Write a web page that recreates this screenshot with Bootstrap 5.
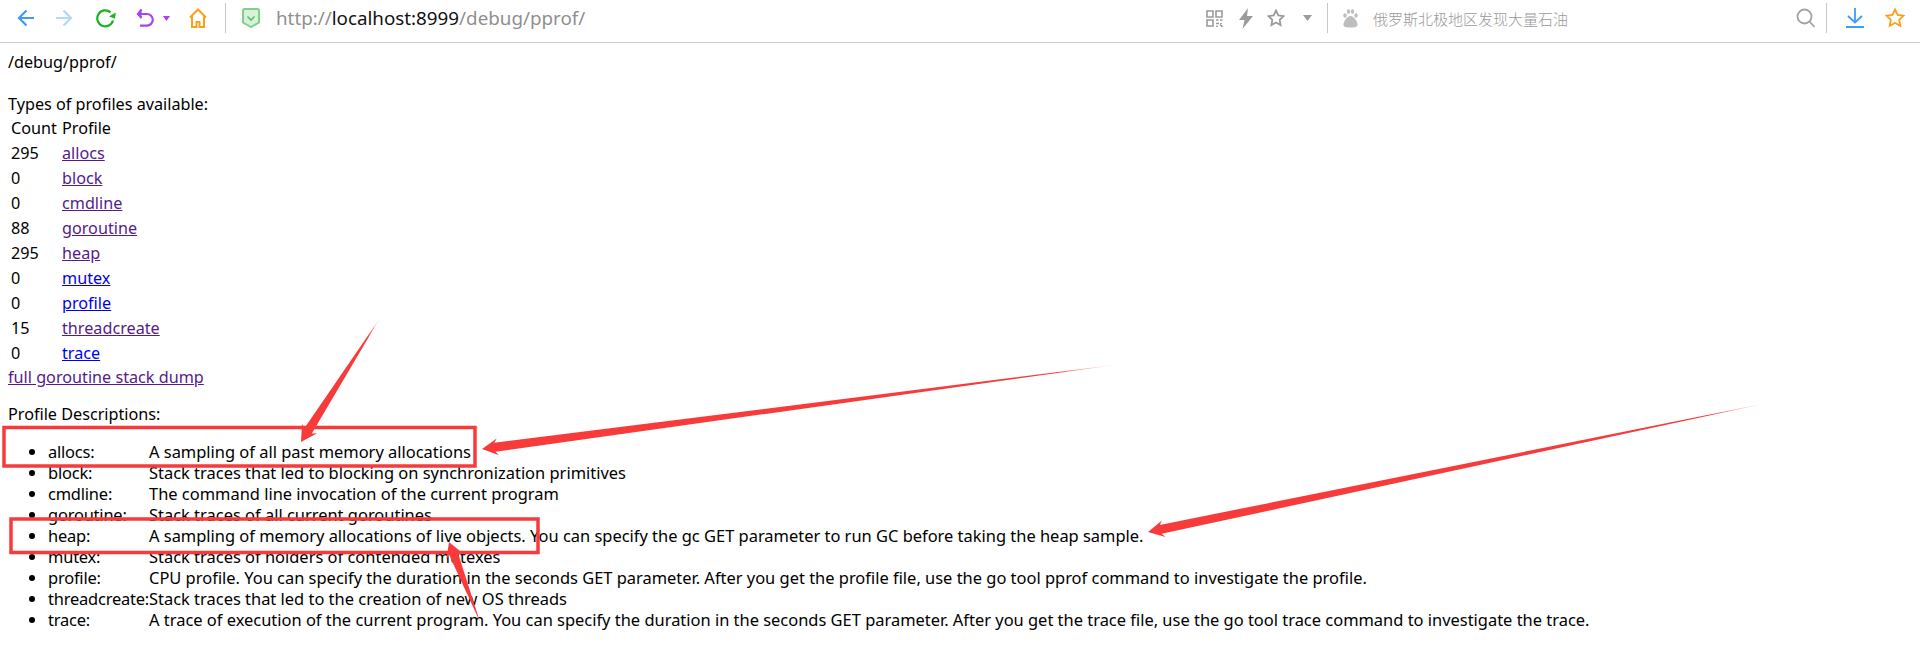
<!DOCTYPE html>
<html lang="en">
  <head>
    <meta charset="UTF-8" />
    <title>/debug/pprof/</title>
    <link
      href="https://cdn.jsdelivr.net/npm/bootstrap@5.3.0/dist/css/bootstrap.min.css"
      rel="stylesheet"
    />
    <style>
      body {
        background: #fff;
        color: #000;
        font-family: "Noto Sans", "Noto Sans CJK SC", sans-serif;
        font-size: 16.2px;
        line-height: 21px;
      }
      a { color: #0000ee; }
      a.seen { color: #551a8b; }

      /* browser toolbar */
      .toolbar {
        height: 43px;
        padding-bottom: 6px;
        border-bottom: 1px solid #cdcdcd;
      }
      .toolbar svg { display: block; flex: none; fill: none; }
      .tb-sep { width: 1px; height: 30px; background: #c8c8c8; flex: none; }
      .m-back { margin-left: 17px; }
      .m-forward { margin-left: 22px; }
      .m-reload { margin-left: 23px; }
      .m-undo { margin-left: 20px; }
      .m-caret { margin-left: 9px; }
      .m-home { margin-left: 19px; }
      .m-sep1 { margin-left: 18px; }
      .m-shield { margin-left: 16px; }
      .tb-url {
        flex: none;
        width: 930px;
        margin-left: 16px;
        padding-top: 1px;
        font-size: 18.8px;
        color: #8f8f8f;
        white-space: nowrap;
      }
      .tb-url b { font-weight: 400; color: #111; }
      .m-bolt { margin-left: 16px; }
      .m-star { margin-left: 14px; }
      .m-caret2 { margin-left: 18px; }
      .m-sep2 { margin-left: 15px; }
      .m-paw { margin-left: 14px; }
      .tb-search {
        margin-left: 14px;
        font-family: "Noto Sans CJK SC", sans-serif;
        font-size: 15px;
        font-weight: 300;
        color: #9a9a9a;
        white-space: nowrap;
      }
      .m-sep3 { margin-left: 10px; }
      .m-down { margin-left: 19px; }
      .m-star2 { margin-left: 21px; margin-right: 15px; }

      /* pprof page */
      .page { padding: 9px 8px 8px; }
      .page table { border-collapse: separate; border-spacing: 2px; }
      .page td, .page th { padding: 1px; font-weight: 400; text-align: left; }
      .prof-count { width: 49px; }
      .page p { margin: 16px 0; }
      .page ul { margin: 15px 0 0; padding-left: 40px; font-size: 16.45px; }
      .prof-name { display: inline-block; width: 101px; letter-spacing: -0.2px; white-space: nowrap; }

      .marks {
        position: absolute;
        top: 0;
        left: 0;
        pointer-events: none;
      }
    </style>
  </head>
  <body>
    <div class="toolbar d-flex align-items-center">
      <svg class="m-back" width="17" height="18" viewBox="0 0 17 18" stroke="#3f9bfb" stroke-width="2.200"><path d="M17 9H2M9.500 1.500 2 9l7.500 7.500" /></svg>
      <svg class="m-forward" width="17" height="18" viewBox="0 0 17 18" stroke="#b4d7fd" stroke-width="2.200"><path d="M0 9h15M7.500 1.500 15 9l-7.500 7.500" /></svg>
      <svg class="m-reload" width="20" height="19" viewBox="0 0 20 19" stroke="#14b51e" stroke-width="2.200"><path d="M14.500 3.300A8 8 0 1 0 17 11.500" /><path d="M19.800 3.500 19 9.500l-6-2z" fill="#14b51e" stroke="none" /></svg>
      <svg class="m-undo" width="18" height="18" viewBox="0 0 18 18" stroke="#a444f5" stroke-width="2.200"><path d="M2 5h9a5.800 5.800 0 0 1 0 11.600H4" /><path d="M5.500 0 1 5l4.500 4.500" fill="#a444f5" stroke="none" /><path d="M5.500 0.500 2 5l3.500 4" /></svg>
      <svg class="m-caret" width="7" height="5" viewBox="0 0 7 5"><path d="M0 0h7L3.500 5z" fill="#a444f5" /></svg>
      <svg class="m-home" width="18" height="20" viewBox="0 0 18 20" stroke="#f9a11b" stroke-width="2"><path d="M1 9.500 9 1.500l8 8M3 8.500V19h4.500v-5h3v5H15V8.500" /></svg>
      <div class="tb-sep m-sep1"></div>
      <svg class="m-shield" width="18" height="20" viewBox="0 0 18 20"><path d="M1 2.500Q1 1 2.500 1h13Q17 1 17 2.500v12L9 19l-8-4.500z" fill="#d8f2da" stroke="#7fd088" stroke-width="2" /><path d="M5.500 8.500 9 12l3.500-3.500" stroke="#5cbf69" stroke-width="1.600" /></svg>
      <div class="tb-url">http://<b>localhost:8999</b>/debug/pprof/</div>

      <svg width="17" height="17" viewBox="0 0 17 17" stroke="#9b9b9b" stroke-width="1.600"><path d="M1 1h6v6H1zM10 1h6v6h-6zM1 10h6v6H1z" /><path d="M10 10h2.500M14 10h2.500M10 13.500h3M15 13v1M10 16.500h2M14 14.500l2.500 2.500" /></svg>
      <svg class="m-bolt" width="14" height="21" viewBox="0 0 14 21"><path d="M9 0 0 12h5.500L3.500 21 14 8H8z" fill="#9b9b9b" /></svg>
      <svg class="m-star" width="18" height="18" viewBox="0 0 18 18" stroke="#9b9b9b" stroke-width="1.800"><path d="M9 1.500l2.300 4.900 5.200.7-3.800 3.700.9 5.300L9 13.500l-4.600 2.600.9-5.300L1.500 7.100l5.200-.7z" /></svg>
      <svg class="m-caret2" width="9" height="6" viewBox="0 0 9 6"><path d="M0 0h9L4.500 6z" fill="#9b9b9b" /></svg>
      <div class="tb-sep m-sep2"></div>
      <svg class="m-paw" width="17" height="19" viewBox="0 0 17 19"><ellipse cx="3" cy="6.500" rx="1.700" ry="2.300" fill="#bdbdbd" /><ellipse cx="6.500" cy="2.500" rx="1.700" ry="2.300" fill="#bdbdbd" /><ellipse cx="10.500" cy="2.500" rx="1.700" ry="2.300" fill="#bdbdbd" /><ellipse cx="14" cy="6.500" rx="1.700" ry="2.300" fill="#bdbdbd" /><path d="M8.500 7c3 0 7 5 7 8.500 0 3-3.500 3-7 3s-7 0-7-3C1.500 12 5.500 7 8.500 7z" fill="#bdbdbd" /></svg>
      <div class="tb-search">俄罗斯北极地区发现大量石油</div>

      <div class="flex-grow-1"></div>

      <svg width="20" height="20" viewBox="0 0 20 20" stroke="#a3a3a3" stroke-width="1.800"><circle cx="8.500" cy="8.500" r="7" /><path d="M13.500 13.500 18.500 19" /></svg>
      <div class="tb-sep m-sep3"></div>
      <svg class="m-down" width="18" height="20" viewBox="0 0 18 20" stroke="#3f9bfb" stroke-width="1.800"><path d="M9 0v14M2 8l7 6.500L16 8M0 19h18" /></svg>
      <svg class="m-star2" width="20" height="20" viewBox="0 0 20 20" stroke="#f9a11b" stroke-width="1.800"><path d="M10 1.500l2.600 5.500 5.900.8-4.300 4.100 1.100 5.900L10 15l-5.300 2.800 1.100-5.900L1.500 7.800l5.900-.8z" /></svg>
    </div>

    <div class="page">
      /debug/pprof/<br />
      <br />
      Types of profiles available:
      <table>
        <thead>
          <tr><td class="prof-count">Count</td><td>Profile</td></tr>
        </thead>
        <tbody>
          <tr><td>295</td><td><a class="seen" href="#">allocs</a></td></tr>
          <tr><td>0</td><td><a class="seen" href="#">block</a></td></tr>
          <tr><td>0</td><td><a class="seen" href="#">cmdline</a></td></tr>
          <tr><td>88</td><td><a class="seen" href="#">goroutine</a></td></tr>
          <tr><td>295</td><td><a class="seen" href="#">heap</a></td></tr>
          <tr><td>0</td><td><a href="#">mutex</a></td></tr>
          <tr><td>0</td><td><a href="#">profile</a></td></tr>
          <tr><td>15</td><td><a class="seen" href="#">threadcreate</a></td></tr>
          <tr><td>0</td><td><a href="#">trace</a></td></tr>
        </tbody>
      </table>
      <a class="seen" href="#">full goroutine stack dump</a>
      <p>Profile Descriptions:</p>
      <ul>
        <li><div class="prof-name">allocs:</div>A sampling of all past memory allocations</li>
        <li><div class="prof-name">block:</div>Stack traces that led to blocking on synchronization primitives</li>
        <li><div class="prof-name">cmdline:</div>The command line invocation of the current program</li>
        <li><div class="prof-name">goroutine:</div>Stack traces of all current goroutines</li>
        <li><div class="prof-name">heap:</div>A sampling of memory allocations of live objects. You can specify the gc GET parameter to run GC before taking the heap sample.</li>
        <li><div class="prof-name">mutex:</div>Stack traces of holders of contended mutexes</li>
        <li><div class="prof-name">profile:</div>CPU profile. You can specify the duration in the seconds GET parameter. After you get the profile file, use the go tool pprof command to investigate the profile.</li>
        <li><div class="prof-name">threadcreate:</div>Stack traces that led to the creation of new OS threads</li>
        <li><div class="prof-name">trace:</div>A trace of execution of the current program. You can specify the duration in the seconds GET parameter. After you get the trace file, use the go tool trace command to investigate the trace.</li>
      </ul>
    </div>

    <!-- red annotations drawn on top of the page -->
    <svg class="marks" id="marks" width="1920" height="652" fill="none">
      <rect x="4" y="427.500" width="471" height="38.500" stroke="#f73b3b" stroke-width="3.500" />
      <rect x="11" y="519" width="527" height="33.500" stroke="#f73b3b" stroke-width="3.500" />
    </svg>

    <script>
      // tail x, tail y, tip x, tip y, shaft width, head length, head half width, fade
      const arrows = [
        [380, 318, 301, 442, 9, 13, 9, 0.15],
        [1122, 364, 482, 449, 9, 13, 8.500, 0.1],
        [1772, 402, 1148, 532, 9, 13, 8.500, 0.1],
        [480, 622, 449, 542, 9, 12, 8.500, 0.02],
      ];

      const svg = document.getElementById("marks");
      const ns = "http://www.w3.org/2000/svg";
      const defs = document.createElementNS(ns, "defs");
      svg.appendChild(defs);

      arrows.forEach(([tx, ty, hx, hy, w, hl, hw, fade], i) => {
        const len = Math.hypot(hx - tx, hy - ty);
        const ux = (hx - tx) / len;
        const uy = (hy - ty) / len;
        const nx = -uy;
        const ny = ux;
        const bx = hx - ux * hl;
        const by = hy - uy * hl;
        const pt = (x, y) => `${x.toFixed(1)},${y.toFixed(1)}`;

        // tail fades out to white
        const grad = document.createElementNS(ns, "linearGradient");
        grad.setAttribute("id", `fade${i}`);
        grad.setAttribute("gradientUnits", "userSpaceOnUse");
        grad.setAttribute("x1", tx);
        grad.setAttribute("y1", ty);
        grad.setAttribute("x2", hx);
        grad.setAttribute("y2", hy);
        grad.innerHTML =
          '<stop offset="0" stop-color="#f73b3b" stop-opacity="0"/>' +
          `<stop offset="${fade}" stop-color="#f73b3b"/>`;
        defs.appendChild(grad);

        const poly = document.createElementNS(ns, "polygon");
        poly.setAttribute(
          "points",
          [
            pt(tx, ty),
            pt(bx + nx * (w / 2), by + ny * (w / 2)),
            pt(bx + nx * hw - ux * 3, by + ny * hw - uy * 3),
            pt(hx, hy),
            pt(bx - nx * hw - ux * 3, by - ny * hw - uy * 3),
            pt(bx - nx * (w / 2), by - ny * (w / 2)),
          ].join(" ")
        );
        poly.setAttribute("fill", `url(#fade${i})`);
        svg.appendChild(poly);
      });
    </script>

    <script src="https://cdn.jsdelivr.net/npm/bootstrap@5.3.0/dist/js/bootstrap.bundle.min.js"></script>
  </body>
</html>
